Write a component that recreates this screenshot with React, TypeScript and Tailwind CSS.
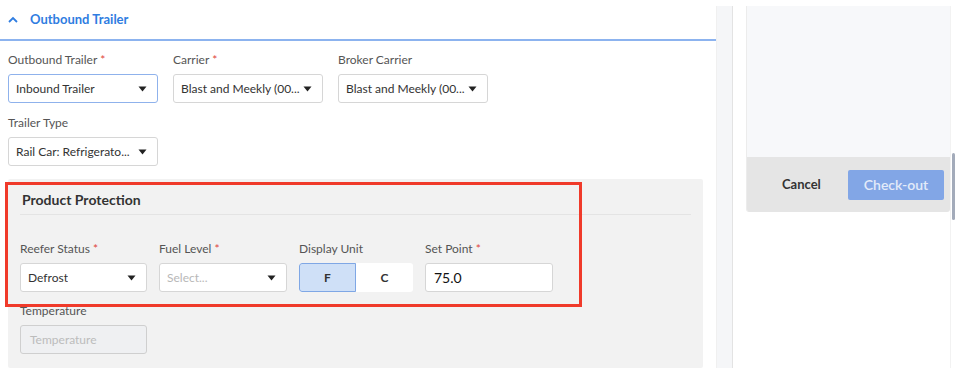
import type { ReactNode } from 'react';

const font = { fontFamily: 'Lato, "Noto Sans", sans-serif' };

function Caret() {
  return (
    <svg width="9" height="6" viewBox="0 0 9 6" className="shrink-0">
      <path d="M0.5 0.5 L8.5 0.5 L4.5 5.5 Z" fill="#222" />
    </svg>
  );
}

function Label({ text, required }: { text: string; required?: boolean }) {
  return (
    <div className="text-[12px] leading-[16px] text-[#555] mb-[6px] whitespace-nowrap">
      {text}
      {required && <span className="text-[#e0463c] ml-[3px]">*</span>}
    </div>
  );
}

function Select({
  value,
  placeholder,
  width,
  focused,
}: {
  value?: string;
  placeholder?: string;
  width: string;
  focused?: boolean;
}) {
  return (
    <div
      className={`${width} h-[29px] flex items-center justify-between pl-[7px] pr-[10px] bg-white rounded-[3px] border ${
        focused ? 'border-[#8fb2ec]' : 'border-[#d6d6d6]'
      }`}
    >
      <span className={`text-[12px] truncate ${value ? 'text-[#333]' : 'text-[#b8b8b8]'}`}>
        {value ?? placeholder}
      </span>
      <Caret />
    </div>
  );
}

function Field({ label, required, children }: { label: string; required?: boolean; children: ReactNode }) {
  return (
    <div>
      <Label text={label} required={required} />
      {children}
    </div>
  );
}

export default function App() {
  return (
    <div className="relative w-[960px] h-[384px] bg-white flex overflow-hidden" style={font}>
      {/* main form */}
      <div className="w-[716px] shrink-0">
        <div className="h-[41px] flex items-center gap-[12px] pl-[8px] border-b-2 border-[#8cb3ef]">
          <svg width="10" height="7" viewBox="0 0 10 7">
            <path d="M1 6 L5 2 L9 6" stroke="#2f7de1" strokeWidth="1.8" fill="none" />
          </svg>
          <span className="text-[13px] font-bold text-[#2f7de1]">Outbound Trailer</span>
        </div>

        <div className="pl-[8px] pt-[11px]">
          <div className="flex gap-[15px]">
            <Field label="Outbound Trailer" required>
              <Select value="Inbound Trailer" width="w-[150px]" focused />
            </Field>
            <Field label="Carrier" required>
              <Select value="Blast and Meekly (00..." width="w-[150px]" />
            </Field>
            <Field label="Broker Carrier">
              <Select value="Blast and Meekly (00..." width="w-[150px]" />
            </Field>
          </div>

          <div className="mt-[12px]">
            <Field label="Trailer Type">
              <Select value="Rail Car: Refrigerato..." width="w-[150px]" />
            </Field>
          </div>

          {/* product protection panel */}
          <div className="mt-[13px] w-[695px] h-[189px] bg-[#f2f2f2] rounded-[2px] px-[12px]">
            <div className="pt-[12px] pl-[2px] text-[14px] leading-[18px] font-bold text-[#333]">
              Product Protection
            </div>
            <div className="mt-[5px] border-t border-[#e4e4e4]" />

            <div className="mt-[26px] flex gap-[12px]">
              <Field label="Reefer Status" required>
                <Select value="Defrost" width="w-[127px]" />
              </Field>
              <Field label="Fuel Level" required>
                <Select placeholder="Select..." width="w-[128px]" />
              </Field>
              <Field label="Display Unit">
                <div className="w-[114px] h-[29px] flex rounded-[3px] overflow-hidden">
                  <div className="w-[57px] flex items-center justify-center bg-[#cfe0f7] border border-[#7fa7e5] rounded-l-[3px] text-[12px] font-bold text-[#333]">
                    F
                  </div>
                  <div className="flex-1 flex items-center justify-center bg-white text-[12px] font-bold text-[#333]">
                    C
                  </div>
                </div>
              </Field>
              <Field label="Set Point" required>
                <div className="w-[128px] h-[29px] flex items-center pl-[8px] bg-white border border-[#d6d6d6] rounded-[3px] text-[14px] text-[#111]">
                  75.0
                </div>
              </Field>
            </div>

            <div className="mt-[11px]">
              <Field label="Temperature">
                <div className="w-[127px] h-[29px] flex items-center pl-[9px] bg-[#eff0f2] border border-[#cfcfcf] rounded-[3px] text-[12px] text-[#bcbcbc]">
                  Temperature
                </div>
              </Field>
            </div>
          </div>
        </div>
      </div>

      {/* side strip */}
      <div className="mt-[6px] w-[17px] h-[362px] bg-[#f5f6f8] border-l border-[#f0f0f0] border-r border-r-[#e3e3e3] shrink-0" />

      {/* right column */}
      <div className="ml-[13px] mt-[6px] w-[205px] h-[362px] border-r border-[#f2f2f2] shrink-0">
        <div className="h-[206px] flex flex-col rounded-b-[3px] overflow-hidden border-l border-[#ececec]">
          <div className="flex-1 bg-[#f7f8fa]" />
          <div className="h-[55px] bg-[#e5e5e5] flex items-center pl-[35px] pr-[6px]">
            <span className="text-[13px] font-bold text-[#333]">Cancel</span>
            <div className="ml-auto w-[96px] h-[30px] flex items-center justify-center bg-[#82a6e6] rounded-[2px] text-[14px] font-semibold text-[#e3ebf9]">
              Check-out
            </div>
          </div>
        </div>
      </div>

      {/* scrollbar thumb */}
      <div className="ml-[1px] mt-[153px] w-[3px] h-[67px] bg-[#a3abba] rounded-full shrink-0" />

      {/* annotation highlight */}
      <div className="absolute left-[5px] top-[182px] w-[577px] h-[125px] border-[3px] border-[#f03a2a] pointer-events-none" />
    </div>
  );
}
